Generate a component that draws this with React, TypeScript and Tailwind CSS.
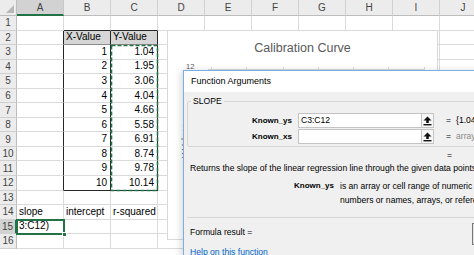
import React from "react"
import clsx from "clsx"

const cols = ["A", "B", "C", "D", "E", "F", "G", "H", "I", "J"]
const ys = ["1.04", "1.95", "3.06", "4.04", "4.66", "5.58", "6.91", "8.74", "9.78", "10.14"]
const rows = Array.from({ length: 16 }, (_, i) => i + 1)

function SheetCell({ r, c }: { r: number; c: number }) {
    let text = ""
    let right = false
    let fill = false
    if (r === 2 && c === 1) { text = "X-Value"; fill = true }
    if (r === 2 && c === 2) { text = "Y-Value"; fill = true }
    if (r >= 3 && r <= 12 && c === 1) { text = String(r - 2); right = true }
    if (r >= 3 && r <= 12 && c === 2) { text = ys[r - 3]; right = true }
    if (r === 14) text = ["slope", "intercept", "r-squared"][c] ?? ""
    if (r === 15 && c === 0) text = "3:C12)"

    const inTable = r >= 2 && r <= 12 && c <= 2
    const bottomDark = (r === 1 || r === 12) && (c === 1 || c === 2)
    const bottomMid = r === 2 && (c === 1 || c === 2)

    return (
        <div
            className={clsx(
                "flex items-center whitespace-nowrap border-r border-b leading-none",
                inTable ? "border-r-[#262626]" : "border-r-[#dadada]",
                bottomDark ? "border-b-[#262626]" : bottomMid ? "border-b-[#8c8c8c]" : "border-b-[#dadada]",
                fill ? "bg-[#d6d6d6]" : "bg-white",
                right ? "justify-end pr-[3px]" : "pl-[2px]"
            )}
        >
            {text}
        </div>
    )
}

function UpArrow() {
    return (
        <svg width="9" height="10" viewBox="0 0 9 10">
            <path d="M4.5 0.5 L8.5 4.5 H5.8 V7 H3.2 V4.5 H0.5 Z" fill="#111" />
            <rect x="0.5" y="8" width="8" height="1.4" fill="#111" />
        </svg>
    )
}

function ArgRow({ label, value, result, gray }: { label: string; value: string; result: string; gray?: boolean }) {
    return (
        <div className="flex h-[15px] items-center">
            <div className="w-[104px] shrink-0 text-right text-[8px] font-bold">{label}</div>
            <div className="ml-[6px] flex h-[15px] w-[136px] shrink-0 items-stretch border border-[#c4c4c4] bg-white">
                <div className="flex flex-1 items-center pl-[2px]">{value}</div>
                <div className="flex w-[12px] items-center justify-center border-l border-[#c4c4c4] bg-[#f7f7f7]">
                    <UpArrow />
                </div>
            </div>
            <div className="ml-[12px] shrink-0">=</div>
            <div className={clsx("ml-[5px] shrink-0 whitespace-nowrap", gray ? "text-[#8a8a8a]" : "text-black")}>{result}</div>
        </div>
    )
}

export default function App() {
    return (
        <div className="relative h-[255px] w-[474px] overflow-hidden bg-white font-['Liberation_Sans',Arial,sans-serif] text-[10px] text-black">
            {/* worksheet grid */}
            <div className="grid w-max grid-cols-[17px_repeat(10,47px)] grid-rows-[16px_repeat(16,14.56px)]">
                <div className="relative border-r border-b border-[#bdbdbd] bg-[#ececec]">
                    <svg className="absolute right-[2px] bottom-[2px]" width="8" height="8">
                        <polygon points="8,0 8,8 0,8" fill="#b8b8b8" />
                    </svg>
                </div>
                {cols.map((c) => (
                    <div
                        key={c}
                        className={clsx(
                            "flex items-center justify-center border-r text-[#444]",
                            c === "A"
                                ? "border-b-2 border-r-[#c8c8c8] border-b-[#217346] bg-[#d2d2d2]"
                                : "border-b border-r-[#d0d0d0] border-b-[#bdbdbd] bg-[#ececec]"
                        )}
                    >
                        {c}
                    </div>
                ))}
                {rows.map((r) => (
                    <React.Fragment key={r}>
                        <div
                            className={clsx(
                                "flex items-center justify-center border-b border-b-[#d0d0d0] text-[#444]",
                                r === 15
                                    ? "border-r-2 border-r-[#217346] bg-[#d2d2d2]"
                                    : "border-r border-r-[#bdbdbd] bg-[#ececec]"
                            )}
                        >
                            {r}
                        </div>
                        {cols.map((c, ci) => (
                            <SheetCell key={c} r={r} c={ci} />
                        ))}
                    </React.Fragment>
                ))}
            </div>

            {/* copy marquee around C3:C12 */}
            <svg className="absolute left-[110px] top-[44px]" width="49" height="148">
                <rect x="1.5" y="1.5" width="46" height="145" fill="none" stroke="#217346" strokeWidth="1.6" strokeDasharray="4 2" />
            </svg>

            {/* active cell A15 */}
            <div className="absolute left-[16px] top-[219px] h-[16px] w-[49px] border-2 border-[#217346]">
                <div className="absolute right-[-4px] bottom-[-4px] h-[5px] w-[5px] border border-white bg-[#217346]" />
            </div>

            {/* chart object */}
            <div className="absolute left-[167px] top-[30px] h-[210px] w-[271px] border border-[#d9d9d9] bg-white">
                <svg className="absolute inset-0" width="271" height="210">
                    <text x="18" y="38" fontSize="7.5" fill="#595959" fontFamily="Liberation Sans, Arial, sans-serif">12</text>
                    <line x1="40" y1="38.5" x2="256" y2="38.5" stroke="#d9d9d9" />
                    {[43, 78, 115, 150, 185, 220, 256].map((x) => (
                        <line key={x} x1={x + 0.5} y1="36" x2={x + 0.5} y2="210" stroke="#d9d9d9" />
                    ))}
                    <text transform="translate(20 110) rotate(-90)" fontSize="9" fill="#595959" textAnchor="middle" fontFamily="Liberation Sans, Arial, sans-serif">Y-Values</text>
                </svg>
                <div className="relative mt-[10px] text-center text-[12.5px] leading-[14px] text-[#595959]">Calibration Curve</div>
            </div>

            {/* Function Arguments dialog */}
            <div className="absolute left-[183px] top-[70px] h-[200px] w-[340px] border-t border-l border-[#7aaee0] bg-[#f0f0f0] text-[8.6px] leading-none shadow-[-3px_0_6px_rgba(0,0,0,0.12)]">
                <div className="flex h-[21px] items-center bg-white pl-[7px] text-[9px]">Function Arguments</div>
                <div className="pl-[3px]">
                    <div className="relative mt-[9px] h-[46px] rounded-[2px] border border-[#d5d5d5]">
                        <span className="absolute top-[-5px] left-[3px] bg-[#f0f0f0] px-[2px]">SLOPE</span>
                        <div className="flex flex-col gap-[1px] pt-[11px]">
                            <ArgRow label="Known_ys" value="C3:C12" result="{1.04;1.95;3.06}" />
                            <ArgRow label="Known_xs" value="" result="array" gray />
                        </div>
                    </div>
                    <div className="flex h-[16px] items-center pl-[260px]">=</div>
                    <div className="flex h-[11px] items-center whitespace-nowrap pl-[3px]">
                        Returns the slope of the linear regression line through the given data points.
                    </div>
                    <div className="mt-[5px] flex">
                        <div className="w-[147px] shrink-0 text-right text-[8px] leading-[14px] font-bold">Known_ys</div>
                        <div className="ml-[6px] shrink-0 whitespace-nowrap leading-[14px]">
                            is an array or cell range of numeric dependent data
                            <br />
                            numbers or names, arrays, or references that
                        </div>
                    </div>
                    <div className="mt-[10px] border-t border-[#d5d5d5]" />
                    <div className="mt-[5px] flex h-[22px] items-center">
                        <div className="mb-[4px] w-[285px] shrink-0 pl-[3px]">Formula result =</div>
                        <div className="h-[22px] w-[60px] shrink-0 border border-[#7a7a7a] bg-[#e1e1e1]" />
                    </div>
                    <div className="mt-[1px] flex h-[12px] items-center pl-[3px] text-[#0066cc]">Help on this function</div>
                </div>
            </div>
        </div>
    )
}
